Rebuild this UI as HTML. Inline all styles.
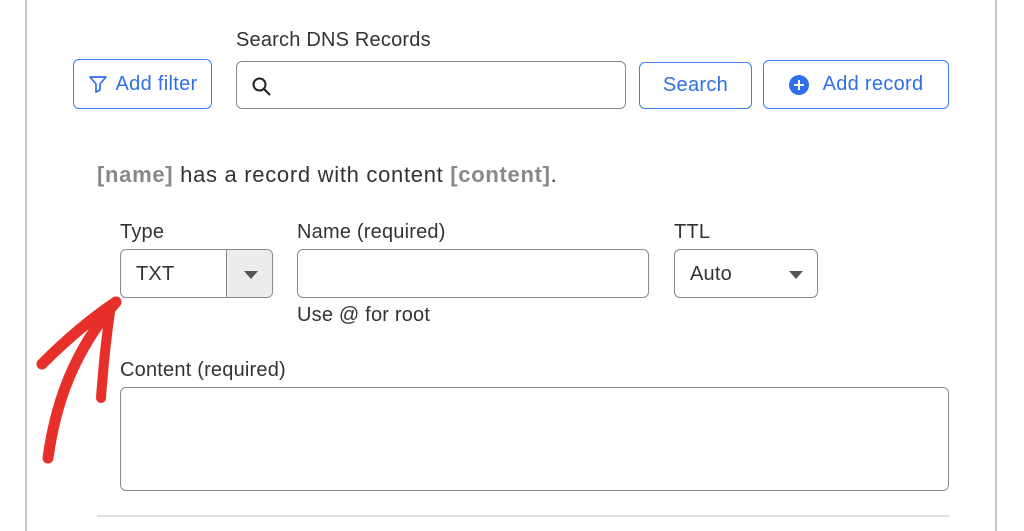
<!DOCTYPE html>
<html><head><style>
*{box-sizing:border-box;margin:0;padding:0}
body{width:1024px;height:531px;background:#fff;position:relative;overflow:hidden;font-family:"Liberation Sans",sans-serif;color:#333}
.a{position:absolute}
.t{position:absolute;font-size:20px;line-height:24px;white-space:nowrap;letter-spacing:0.2px}
.box{position:absolute;border:1.5px solid #8a8a8a;border-radius:6px;background:#fff}
.btn{position:absolute;border:1.5px solid #3b7cf0;border-radius:6px;color:#2f6fe8;font-size:20px;letter-spacing:0.3px;display:flex;align-items:center;justify-content:center}
.g{color:#888;font-weight:bold}
</style></head><body>
<div class="a" style="left:25px;top:0;width:2px;height:531px;background:#c8c8c8"></div>
<div class="a" style="left:995px;top:0;width:2px;height:531px;background:#c8c8c8"></div>

<div class="btn" style="left:73px;top:59px;width:139px;height:50px">
<svg width="20" height="20" viewBox="0 0 20 20" style="margin-right:8px"><path d="M2 3h16l-6 7v6l-4 2v-8z" fill="none" stroke="#2f6fe8" stroke-width="1.7" stroke-linejoin="round"/></svg>Add filter</div>

<div class="t" style="left:236px;top:28px">Search DNS Records</div>
<div class="box" style="left:236px;top:61px;width:390px;height:48px"></div>
<svg class="a" style="left:250px;top:75px" width="24" height="24" viewBox="0 0 24 24"><circle cx="9.5" cy="9.5" r="6" fill="none" stroke="#222" stroke-width="2"/><path d="M14 14l6 6" stroke="#222" stroke-width="2.2"/></svg>

<div class="btn" style="left:639px;top:62px;width:113px;height:47px">Search</div>
<div class="btn" style="left:763px;top:60px;width:186px;height:49px">
<svg width="20" height="20" viewBox="0 0 20 20" style="margin-right:14px"><circle cx="10" cy="10" r="10" fill="#2f6fe8"/><path d="M10 5v10M5 10h10" stroke="#fff" stroke-width="2"/></svg>Add record</div>

<div class="t" style="left:97px;top:163px;font-size:22px;letter-spacing:0.7px"><span class="g">[name]</span> has a record with content <span class="g">[content]</span>.</div>

<div class="t" style="left:120px;top:220px">Type</div>
<div class="box" style="left:120px;top:249px;width:153px;height:49px;overflow:hidden">
<div class="a" style="left:105px;top:0;width:47px;height:100%;background:#ececec;border-left:1.5px solid #8a8a8a"></div>
<div class="t" style="left:15px;top:12px">TXT</div>
<div class="a" style="left:123px;top:21px;width:0;height:0;border-left:7px solid transparent;border-right:7px solid transparent;border-top:8px solid #555"></div>
</div>

<div class="t" style="left:297px;top:220px">Name (required)</div>
<div class="box" style="left:297px;top:249px;width:352px;height:49px"></div>
<div class="t" style="left:297px;top:303px">Use @ for root</div>

<div class="t" style="left:674px;top:220px">TTL</div>
<div class="box" style="left:674px;top:249px;width:144px;height:49px">
<div class="t" style="left:15px;top:12px">Auto</div>
<div class="a" style="left:114px;top:21px;width:0;height:0;border-left:7px solid transparent;border-right:7px solid transparent;border-top:8px solid #555"></div>
</div>

<div class="t" style="left:120px;top:358px">Content (required)</div>
<div class="box" style="left:120px;top:387px;width:829px;height:104px"></div>
<div class="a" style="left:97px;top:515px;width:852px;height:2px;background:#e0e0e0"></div>

<svg class="a" style="left:0;top:0" width="1024" height="531" viewBox="0 0 1024 531">
<g fill="none" stroke="#e8302a" stroke-linecap="round" stroke-linejoin="round">
<path d="M48 458 C56 400 75 350 116 302" stroke-width="11"/>
<path d="M116 302 C92 318 68 338 42 364" stroke-width="11"/>
<path d="M110 312 C106 340 103 370 101 398" stroke-width="10"/>
</g></svg>
</body></html>
